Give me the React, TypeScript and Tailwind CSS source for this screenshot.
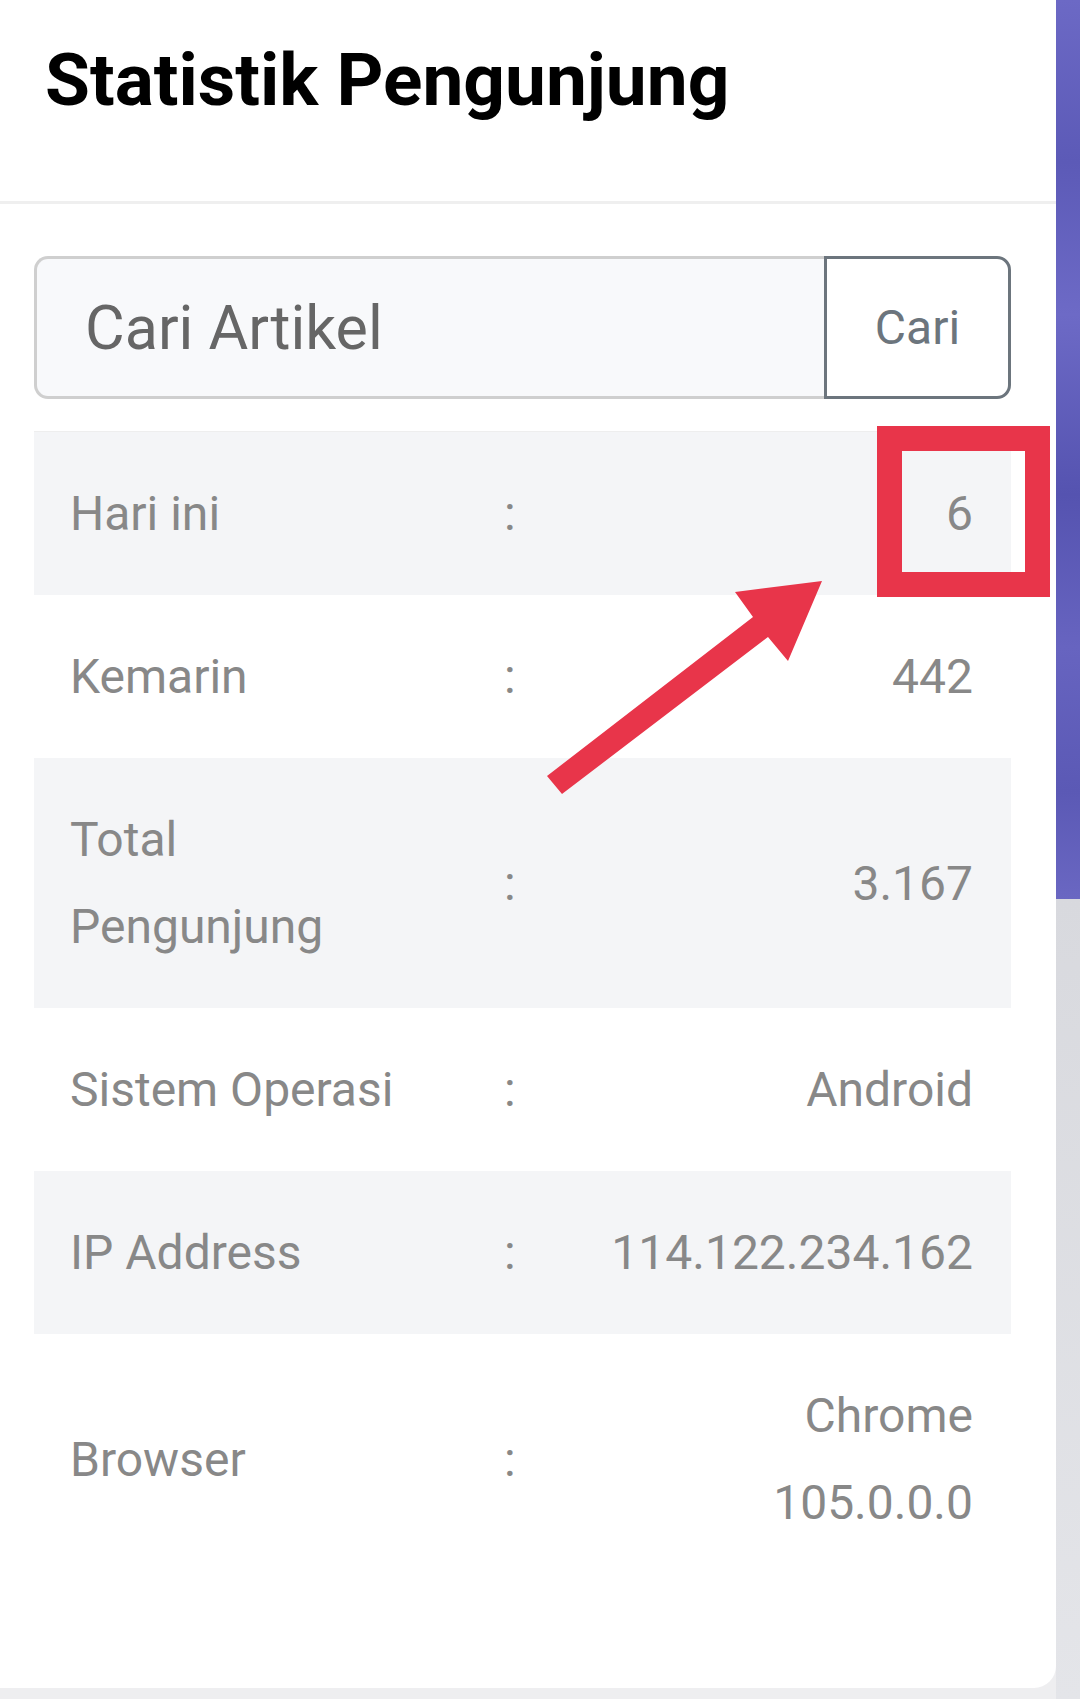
import React from 'react';

type Row = { label: string[]; value: string[] };

// data statistik pengunjung
const rows: Row[] = [
  { label: ['Hari ini'], value: ['6'] },
  { label: ['Kemarin'], value: ['442'] },
  { label: ['Total', 'Pengunjung'], value: ['3.167'] },
  { label: ['Sistem Operasi'], value: ['Android'] },
  { label: ['IP Address'], value: ['114.122.234.162'] },
  { label: ['Browser'], value: ['Chrome', '105.0.0.0'] },
];

function StatRow({ row, striped }: { row: Row; striped: boolean }) {
  return (
    <div
      className={`flex items-center py-[38px] text-[48px] leading-[87px] text-[#888888] ${
        striped ? 'bg-[#f4f5f7]' : 'bg-white'
      }`}
    >
      <div className="w-[440px] shrink-0 pl-[36px]">
        {row.label.map((l) => (
          <div key={l}>{l}</div>
        ))}
      </div>
      <div className="w-[86px] shrink-0 pl-[30px]">:</div>
      <div className="flex-1 pr-[38px] text-right">
        {row.value.map((v) => (
          <div key={v}>{v}</div>
        ))}
      </div>
    </div>
  );
}

export default function App() {
  return (
    <div
      className="relative flex h-[1699px] w-[1080px] overflow-hidden bg-[#eeeef0]"
      style={{ fontFamily: 'Roboto, "Noto Sans", sans-serif' }}
    >
      {/* kartu utama */}
      <div className="w-[1056px] shrink-0">
        <div className="h-[1688px] rounded-br-[22px] bg-white">
          <div className="h-[204px] border-b-[3px] border-[#efefef] pl-[45px] pt-[42px]">
            <h1 className="text-[73px] font-bold leading-[76px] text-black">Statistik Pengunjung</h1>
          </div>

          <div className="pl-[34px] pr-[45px] pt-[52px]">
            {/* form pencarian */}
            <div className="flex h-[143px]">
              <input
                className="h-full min-w-0 flex-1 rounded-l-[14px] border-[3px] border-r-0 border-[#cfcfcf] bg-[#f8f9fb] pl-[48px] text-[61px] text-[#555] outline-none placeholder:text-[#666666]"
                placeholder="Cari Artikel"
              />
              <button className="h-full w-[187px] rounded-r-[14px] border-[3px] border-[#6c757d] bg-white text-[48px] text-[#6c757d]">
                Cari
              </button>
            </div>

            {/* tabel statistik */}
            <div className="mt-[32px] border-t border-[#eeeeee]">
              {rows.map((r, i) => (
                <StatRow key={r.label.join(' ')} row={r} striped={i % 2 === 0} />
              ))}
            </div>
          </div>
        </div>
      </div>

      {/* latar kanan */}
      <div className="flex flex-1 flex-col">
        <div className="h-[899px] bg-[linear-gradient(180deg,#6c69c5_0%,#5c5ab7_18%,#6d6ac6_35%,#5553b0_55%,#6764c0_72%,#5b59b5_88%,#6a67c2_100%)]" />
        <div className="flex-1 bg-[linear-gradient(180deg,#d8d9de,#e4e5e9)]" />
      </div>

      {/* anotasi merah */}
      <div className="absolute left-[877px] top-[426px] h-[171px] w-[173px] border-[25px] border-[#e8354a]" />
      <svg className="pointer-events-none absolute left-0 top-0" width="1080" height="1699" viewBox="0 0 1080 1699">
        <polygon
          points="547,776 753,617 735,592 822,581 788,661 768,637 562,794"
          fill="#e8354a"
        />
      </svg>
    </div>
  );
}
